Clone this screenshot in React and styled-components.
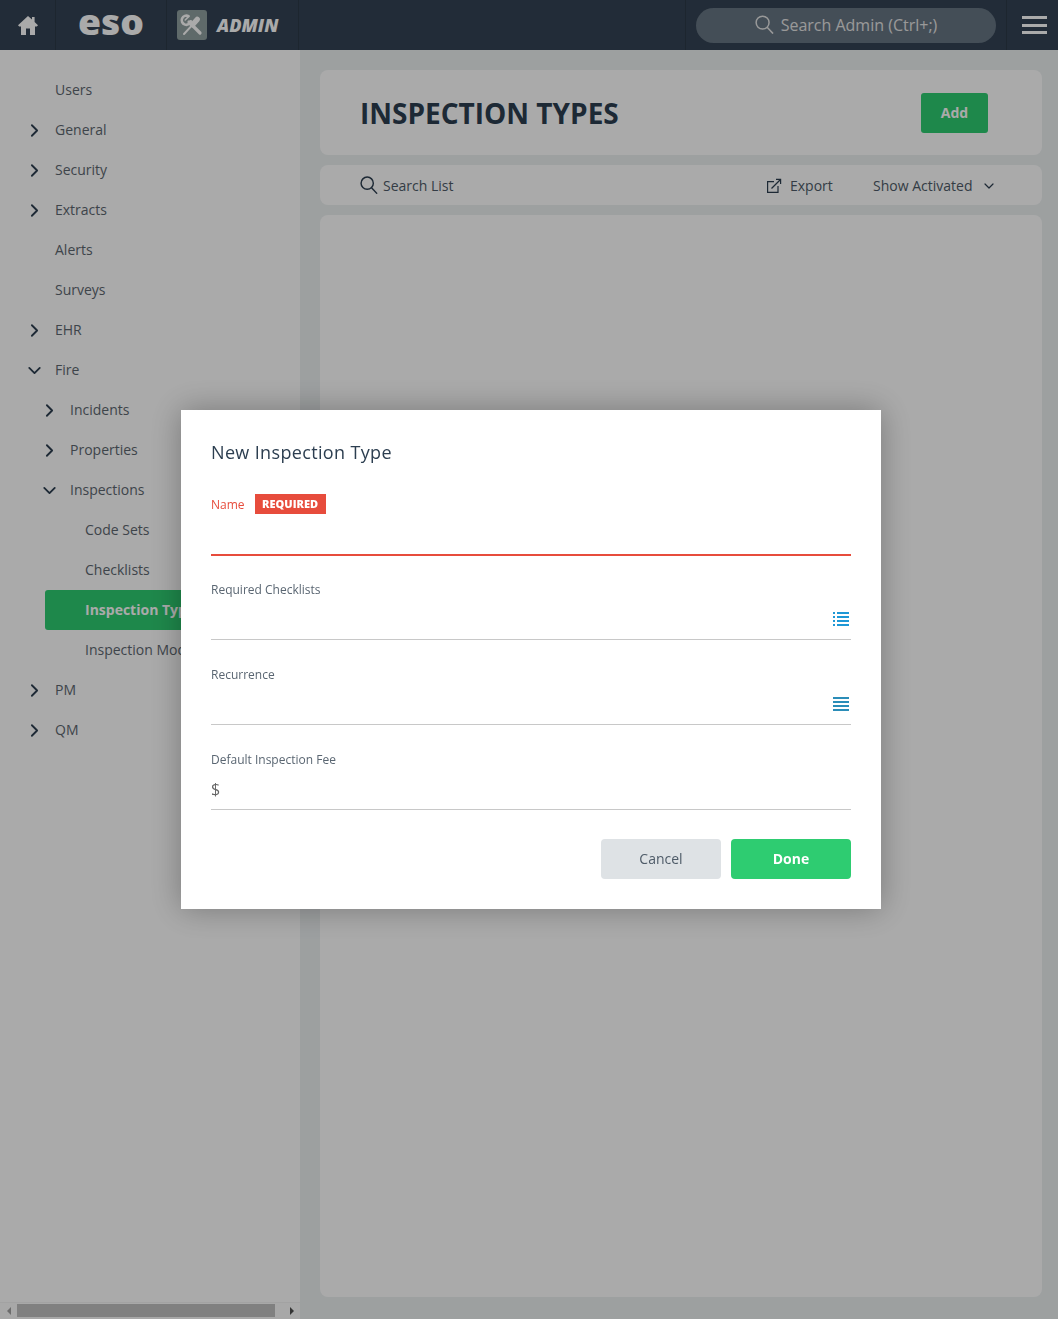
import styled, { createGlobalStyle } from "styled-components"
import { ChevronDown, ChevronRight } from "lucide-react"

const GlobalStyle = createGlobalStyle`
    html, body {
        margin: 0;
        padding: 0;
        height: 100%;
        overflow: hidden;
        font-family: "Open Sans", "Liberation Sans", sans-serif;
    }
    * { box-sizing: border-box; }
`

const menu = [
    { label: "Users", level: 0 },
    { label: "General", level: 0, arrow: "right" },
    { label: "Security", level: 0, arrow: "right" },
    { label: "Extracts", level: 0, arrow: "right" },
    { label: "Alerts", level: 0 },
    { label: "Surveys", level: 0 },
    { label: "EHR", level: 0, arrow: "right" },
    { label: "Fire", level: 0, arrow: "down" },
    { label: "Incidents", level: 1, arrow: "right" },
    { label: "Properties", level: 1, arrow: "right" },
    { label: "Inspections", level: 1, arrow: "down" },
    { label: "Code Sets", level: 2 },
    { label: "Checklists", level: 2 },
    { label: "Inspection Types", level: 2, active: true },
    { label: "Inspection Modules", level: 2 },
    { label: "PM", level: 0, arrow: "right" },
    { label: "QM", level: 0, arrow: "right" },
]

const HomeIcon = () => (
    <svg width="20" height="19" viewBox="0 0 20 19" fill="currentColor">
        <path d="M10 0 L14 3.6 V1 H16.6 V6 L20 9.2 L18.8 10.6 H17 V19 H12 V12.5 H8 V19 H3 V10.6 H1.2 L0 9.2 Z" />
    </svg>
)

const EsoLogo = () => (
    <svg width="72" height="40" viewBox="0 0 72 40" fill="currentColor">
        <text x="3" y="30" fontFamily="Open Sans" fontWeight="800" fontSize="36" textLength="66" lengthAdjust="spacingAndGlyphs">eso</text>
    </svg>
)

const ToolsIcon = () => (
    <svg width="30" height="30" viewBox="0 0 30 30" fill="none" stroke="currentColor" strokeLinecap="round">
        <path d="M12 12 L23 23" strokeWidth="3.2" />
        <path d="M11.5 6.2 A4.6 4.6 0 1 0 13.8 11.2" strokeWidth="2.6" />
        <path d="M8.2 10 L11.8 6.4" strokeWidth="1.5" />
        <path d="M20.2 9.4 L15.5 14.8" strokeWidth="5.4" />
        <path d="M15 15.4 L7 24" strokeWidth="2" />
    </svg>
)

const SearchGlyph = ({ size }) => (
    <svg width={size} height={size} viewBox="0 0 20 20" fill="none" stroke="currentColor" strokeWidth="1.6">
        <circle cx="8" cy="8" r="6.8" />
        <path d="M12.8 13 L19 19.6" />
    </svg>
)

const ExportIcon = () => (
    <svg width="16" height="16" viewBox="0 0 16 16" fill="none" stroke="currentColor" strokeWidth="1.2">
        <path d="M8 3.6 H1.6 V14.4 H12 V8" />
        <path d="M5.5 10.5 L14 2" />
        <path d="M10 1.4 H14.6 V6" />
    </svg>
)

const ListIcon = () => (
    <svg width="16" height="14" viewBox="0 0 16 14" fill="#1f98d6">
        <rect x="0" y="0" width="2" height="2" />
        <rect x="4" y="0" width="12" height="2" />
        <rect x="0" y="4" width="2" height="2" />
        <rect x="4" y="4" width="12" height="2" />
        <rect x="0" y="8" width="2" height="2" />
        <rect x="4" y="8" width="12" height="2" />
        <rect x="0" y="12" width="2" height="2" />
        <rect x="4" y="12" width="12" height="2" />
    </svg>
)

const LinesIcon = () => (
    <svg width="16" height="14" viewBox="0 0 16 14" fill="#2b8db8">
        <rect x="0" y="0" width="16" height="2" />
        <rect x="0" y="4" width="16" height="2" />
        <rect x="0" y="8" width="16" height="2" />
        <rect x="0" y="12" width="16" height="2" />
    </svg>
)

export default function App() {
    return (
        <>
            <GlobalStyle />
            <Page>
                <TopBar>
                    <HomeCell><HomeIcon /></HomeCell>
                    <LogoCell><EsoLogo /></LogoCell>
                    <AdminCell>
                        <ToolTile><ToolsIcon /></ToolTile>
                        <AdminLabel>ADMIN</AdminLabel>
                    </AdminCell>
                    <SearchCell>
                        <SearchPill>
                            <SearchGlyph size={19} />
                            <PillText>Search Admin (Ctrl+;)</PillText>
                        </SearchPill>
                    </SearchCell>
                    <MenuCell>
                        <MenuBar />
                        <MenuBar />
                        <MenuBar />
                    </MenuCell>
                </TopBar>

                <Body>
                    <Sidebar>
                        <Nav>
                            {menu.map((item) => (
                                <NavRow key={item.label} $level={item.level} $active={item.active}>
                                    <ArrowSlot>
                                        {item.arrow === "right" && <ChevronRight size={21} strokeWidth={2.1} />}
                                        {item.arrow === "down" && <ChevronDown size={21} strokeWidth={2.1} />}
                                    </ArrowSlot>
                                    <NavLabel>{item.label}</NavLabel>
                                </NavRow>
                            ))}
                        </Nav>
                        <ScrollBar>
                            <ScrollArrow $dir="left" />
                            <ScrollThumb />
                            <ScrollArrow $dir="right" />
                        </ScrollBar>
                    </Sidebar>

                    <Main>
                        <TitlePanel>
                            <Title>INSPECTION TYPES</Title>
                            <AddButton>Add</AddButton>
                        </TitlePanel>
                        <ToolPanel>
                            <ListSearch>
                                <SearchGlyph size={18} />
                                Search List
                            </ListSearch>
                            <ExportLink>
                                <ExportIcon />
                                Export
                            </ExportLink>
                            <ShowFilter>
                                Show Activated
                                <ChevronDown size={16} strokeWidth={1.8} />
                            </ShowFilter>
                        </ToolPanel>
                        <ContentPanel />
                    </Main>
                </Body>

                <Overlay>
                    <Modal>
                        <ModalTitle>New Inspection Type</ModalTitle>

                        <Field $error>
                            <LabelRow>
                                <FieldLabel $error>Name</FieldLabel>
                                <RequiredBadge>REQUIRED</RequiredBadge>
                            </LabelRow>
                            <ValueRow />
                        </Field>

                        <Field>
                            <LabelRow>
                                <FieldLabel>Required Checklists</FieldLabel>
                            </LabelRow>
                            <ValueRow><ListIcon /></ValueRow>
                        </Field>

                        <Field>
                            <LabelRow>
                                <FieldLabel>Recurrence</FieldLabel>
                            </LabelRow>
                            <ValueRow><LinesIcon /></ValueRow>
                        </Field>

                        <Field>
                            <LabelRow>
                                <FieldLabel>Default Inspection Fee</FieldLabel>
                            </LabelRow>
                            <ValueRow><Dollar>$</Dollar></ValueRow>
                        </Field>

                        <ModalActions>
                            <CancelButton>Cancel</CancelButton>
                            <DoneButton>Done</DoneButton>
                        </ModalActions>
                    </Modal>
                </Overlay>
            </Page>
        </>
    )
}

const Page = styled.div`
    width: 1058px;
    height: 1319px;
    display: flex;
    flex-direction: column;
    background: #ecf0f1;
`

const TopBar = styled.header`
    height: 50px;
    flex: none;
    display: flex;
    background: #344354;
    color: #fff;
`

const Cell = styled.div`
    height: 100%;
    display: flex;
    align-items: center;
    border-right: 1px solid #2c3947;
`

const HomeCell = styled(Cell)`
    width: 56px;
    justify-content: center;
`

const LogoCell = styled(Cell)`
    width: 111px;
    justify-content: center;
`

const AdminCell = styled(Cell)`
    width: 132px;
    padding-left: 10px;
    gap: 10px;
`

const ToolTile = styled.div`
    width: 30px;
    height: 30px;
    border-radius: 3px;
    display: flex;
    background: #8f9f9f;
`

const AdminLabel = styled.span`
    font-weight: 800;
    font-style: italic;
    font-size: 18px;
`

const SearchCell = styled(Cell)`
    margin-left: 386px;
    width: 322px;
    padding-left: 10px;
    border-left: 1px solid #2c3947;
`

const SearchPill = styled.div`
    width: 300px;
    height: 35px;
    margin-top: 1px;
    border-radius: 18px;
    display: flex;
    align-items: center;
    justify-content: center;
    gap: 7px;
    background: #667583;
    color: #e6e6e6;
    font-size: 16px;

    svg { margin-top: -2px; }
`

const PillText = styled.span`
    margin-top: -2px;
`

const MenuCell = styled.div`
    flex: 1;
    display: flex;
    flex-direction: column;
    align-items: flex-end;
    justify-content: center;
    gap: 4.5px;
    padding-right: 11px;
`

const MenuBar = styled.span`
    width: 25px;
    height: 3px;
    background: #fff;
`

const Body = styled.div`
    flex: 1;
    min-height: 0;
    display: flex;
`

const Sidebar = styled.aside`
    width: 300px;
    flex: none;
    display: flex;
    flex-direction: column;
    background: #fff;
`

const Nav = styled.nav`
    flex: 1;
    padding-top: 20px;
    overflow: hidden;
`

const NavRow = styled.div`
    height: 40px;
    display: flex;
    align-items: center;
    font-size: 14px;
    white-space: nowrap;
    border-radius: ${({ $active }) => ($active ? "3px 0 0 3px" : "0")};
    margin-left: ${({ $active }) => ($active ? "45px" : "0")};
    padding-left: ${({ $level, $active }) => 23 + $level * 15 - ($active ? 45 : 0)}px;
    background: ${({ $active }) => ($active ? "#2ecc71" : "transparent")};
    color: ${({ $active }) => ($active ? "#fff" : "#5d6770")};
    font-weight: ${({ $active }) => ($active ? 700 : 400)};
`

const NavLabel = styled.span`
    margin-top: -2px;
`

const ArrowSlot = styled.span`
    width: 24px;
    height: 24px;
    flex: none;
    margin-right: 8px;
    padding-right: 2px;
    display: flex;
    align-items: center;
    justify-content: center;
    color: #2c3e50;
`

const ScrollBar = styled.div`
    height: 17px;
    flex: none;
    display: flex;
    align-items: flex-start;
    padding-top: 1px;
    background: #fcfcfc;
    border-top: 1px solid #f4f4f4;
`

const ScrollArrow = styled.span`
    width: 17px;
    height: 13px;
    display: flex;
    align-items: center;
    justify-content: center;

    &::before {
        content: '';
        border-top: 4px solid transparent;
        border-bottom: 4px solid transparent;
        border-${({ $dir }) => ($dir === "left" ? "right" : "left")}: 4px solid ${({ $dir }) => ($dir === "left" ? "#a3a3a3" : "#505050")};
    }
`

const ScrollThumb = styled.div`
    width: 258px;
    height: 13px;
    margin-right: 8px;
    background: #c1c1c1;
`

const Main = styled.main`
    flex: 1;
    display: flex;
    flex-direction: column;
    gap: 10px;
    padding: 20px 16px 22px 20px;
`

const Panel = styled.section`
    background: #fff;
    border-radius: 8px;
`

const TitlePanel = styled(Panel)`
    height: 85px;
    flex: none;
    display: flex;
    align-items: center;
    justify-content: space-between;
    padding: 0 54px 0 40px;
`

const Title = styled.h1`
    margin: 1px 0 0;
    font-size: 28px;
    font-weight: 700;
    color: #2c3e50;
`

const AddButton = styled.button`
    width: 67px;
    height: 40px;
    border: 0;
    border-radius: 3px;
    padding: 0;
    background: #2ecc71;
    color: #fff;
    font-family: inherit;
    font-size: 14px;
    font-weight: 700;
`

const ToolPanel = styled(Panel)`
    height: 40px;
    flex: none;
    display: flex;
    align-items: center;
    padding-left: 40px;
    font-size: 14px;
    color: #4e5b68;
`

const ListSearch = styled.div`
    display: flex;
    align-items: center;
    gap: 5px;
    width: 406px;

    svg { color: #2c3e50; }
`

const ExportLink = styled.div`
    display: flex;
    align-items: center;
    gap: 8px;
    width: 107px;

    svg { color: #2c3e50; margin-top: 1px; }
`

const ShowFilter = styled.div`
    display: flex;
    align-items: center;
    gap: 9px;

    svg { color: #2c3e50; margin-top: 2px; }
`

const ContentPanel = styled(Panel)`
    flex: 1;
`

const Overlay = styled.div`
    position: fixed;
    inset: 0;
    display: flex;
    align-items: center;
    justify-content: center;
    padding-left: 4px;
    background: rgba(0, 0, 0, 0.333);
`

const Modal = styled.div`
    width: 700px;
    height: 499px;
    padding: 30px;
    background: #fff;
    box-shadow: 0 0 30px rgba(0, 0, 0, 0.3);
`

const ModalTitle = styled.h2`
    margin: 0;
    height: 30px;
    font-size: 18px;
    line-height: 25px;
    font-weight: 500;
    letter-spacing: 0.35px;
    color: #2c3e50;
`

const Field = styled.div`
    height: ${({ $error }) => ($error ? "86px" : "85px")};
    margin-bottom: ${({ $error }) => ($error ? "-1px" : "0")};
    padding-top: 24px;
    display: flex;
    flex-direction: column;
    border-bottom: ${({ $error }) => ($error ? "2px solid #e74c3c" : "1px solid #c8c8c8")};
`

const LabelRow = styled.div`
    height: 20px;
    flex: none;
    display: flex;
    align-items: center;
    gap: 10px;
`

const FieldLabel = styled.label`
    font-size: 12px;
    color: ${({ $error }) => ($error ? "#e74c3c" : "#5a6672")};
`

const RequiredBadge = styled.span`
    height: 20px;
    padding: 0 7.5px 2px;
    display: flex;
    align-items: center;
    background: #e74c3c;
    color: #fff;
    font-size: 11px;
    font-weight: 800;
`

const ValueRow = styled.div`
    flex: 1;
    display: flex;
    align-items: center;
    justify-content: flex-end;
    padding-right: 2px;
`

const Dollar = styled.span`
    margin-right: auto;
    font-size: 16px;
    color: #666;
`

const ModalActions = styled.div`
    margin-top: 29px;
    display: flex;
    justify-content: flex-end;
    gap: 10px;
`

const ModalButton = styled.button`
    width: 120px;
    height: 40px;
    border: 0;
    border-radius: 4px;
    padding: 0 0 2px;
    font-family: inherit;
    font-size: 14px;
`

const CancelButton = styled(ModalButton)`
    background: #dee2e5;
    color: #4e5b68;
`

const DoneButton = styled(ModalButton)`
    background: #2ecc71;
    color: #fff;
    font-weight: 700;
`
